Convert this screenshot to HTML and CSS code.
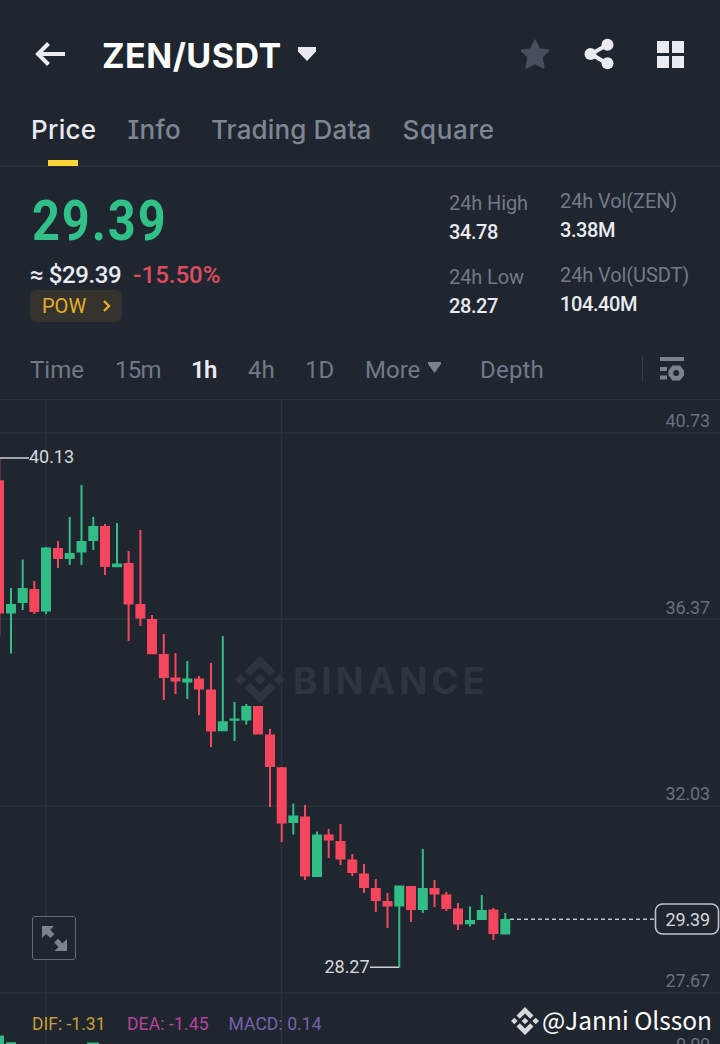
FILE: index.html
```html
<!DOCTYPE html>
<html lang="en">
<head>
<meta charset="utf-8">
<title>ZEN/USDT</title>
<link rel="stylesheet" href="styles.css">
</head>
<body>
<main class="screen">
  <header class="topbar">
    <svg class="back" width="32" height="28" viewBox="0 0 32 28"><path d="M31 14H4M14.500 3.500L4 14l10.500 10.500"/></svg>
    <h1 class="pair">ZEN/USDT</h1>
    <svg class="pair-caret" width="20" height="16" viewBox="0 0 20 16"><path d="M1 1h18v4.500L10 15 1 5.500z"/></svg>
    <nav class="actions">
      <svg class="star" width="32" height="32" viewBox="0 0 32 32"><path d="M16 2.500l4.200 8.800 9.300 1.300-6.800 6.400 1.900 10.500L16 25.400l-8.600 4.100 1.900-10.500-6.800-6.400 9.300-1.300z"/></svg>
      <svg class="share" width="30" height="32" viewBox="0 0 30 32"><path d="M23 7L7 16l16 9.500"/><circle cx="23.500" cy="6.700" r="6"/><circle cx="6.500" cy="16" r="6"/><circle cx="23.500" cy="25.300" r="6"/></svg>
      <svg class="grid-icon" width="27" height="27" viewBox="0 0 27 27"><path d="M0 0h12v12H0zM15 0h12v12H15zM0 15h12v12H0zM15 15h12v12H15z"/></svg>
    </nav>
  </header>

  <nav class="tabs">
    <a class="tab tab-active">Price</a>
    <a class="tab tab-info">Info</a>
    <a class="tab tab-data">Trading Data</a>
    <a class="tab">Square</a>
  </nav>

  <section class="summary">
    <div class="quote">
      <div class="last">29.39</div>
      <div class="fiat"><span class="usd">≈ $29.39</span><span class="change">-15.50%</span></div>
      <div class="tag">POW<svg width="8" height="12" viewBox="0 0 8 12"><path d="M1 1l5 5-5 5"/></svg></div>
    </div>
    <dl class="stats stats-range">
      <dt>24h High</dt><dd>34.78</dd>
      <dt>24h Low</dt><dd>28.27</dd>
    </dl>
    <dl class="stats stats-volume">
      <dt>24h Vol(ZEN)</dt><dd>3.38M</dd>
      <dt>24h Vol(USDT)</dt><dd>104.40M</dd>
    </dl>
  </section>

  <nav class="intervals">
    <a class="i-time">Time</a>
    <a class="i-15m">15m</a>
    <a class="i-1h">1h</a>
    <a class="i-4h">4h</a>
    <a class="i-1d">1D</a>
    <a class="i-more">More<svg width="13" height="11" viewBox="0 0 13 11"><path d="M0 0h13v2L6.500 11 0 2z"/></svg></a>
    <a class="i-depth">Depth</a>
    <span class="settings">
      <svg width="24" height="25" viewBox="0 0 24 25"><path d="M0 0h24v4H0zM0 10h7v4H0zM0 18.500h7v4H0z"/><path fill-rule="evenodd" d="M12.500 8.500h7.500l4 5v5l-4 5h-7.500l-4-5v-5zM16.200 13a3 3 0 1 0 0 6 3 3 0 0 0 0-6z"/></svg>
    </span>
  </nav>

  <section class="chart">
    <svg class="plot" width="720" height="645" viewBox="0 399 720 645">
      <path class="gridline" d="M0 399.500H720M0 433H720M0 619H720M0 806H720M0 993H720M46 399V1044M281.500 399V1044"/>
      <g class="watermark">
        <path d="M260 655.500l15.500 15.500-5.500 5.500-10-10-10 10-5.500-5.500zM260 703.500l15.500-15.500-5.500-5.500-10 10-10-10-5.500 5.500zM260 674l5.500 5.500-5.500 5.500-5.500-5.500zM240.500 674l5.500 5.500-5.500 5.500-5.500-5.500zM279 674l5.500 5.500-5.500 5.500-5.500-5.500z"/>
        <text x="293" y="693.500" textLength="192">BINANCE</text>
      </g>
      <path class="wick down" d="M-.7 458V636M34.300 581V614M58 541V568M105 524V575M128.600 551V641M140.400 530V626M152 615V654M163.800 634V700M175.500 653V694M199 676V715M211 663V747M270 729V807M281.700 767V842M305 805V880M328.700 829V858M340.500 824V865M352.300 854V876M364 864V893M375.800 879V912M387.500 893V928M411 886V922M434.500 880V907M446.300 892V911M458 903V930M493.400 908V940"/>
      <path class="wick up" d="M11 588V653.500M22.700 559.500V610M46 547V614M69.700 517V565M81.500 485V565M93.300 517V550M117 523V567M187.300 661V699M222.800 636V731M234.500 702V741M246.300 704V724.500M293.300 803.500V834.500M317 831.500V877M399.300 886V967.500M422.800 849V913M470 906.500V926.500M481.800 895V920M505.300 913V934"/>
      <path class="body down" d="M-1 480.300V613.500M34.300 589V612M58 548V559M105 526V567M128.600 563V604.500M140.400 604V618.500M152 619V654.300M163.800 654V678M175.500 677.500V681.500M199 678.500V689.500M211 689.500V731.500M258 706V734.500M270 734.500V767M281.700 767.300V823.500M305 816.500V876.500M328.700 834.500V840.500M340.500 841V859.500M352.300 859.500V873M364 873.500V888M375.800 888V901M387.500 901V906.500M411 886V910M434.500 888V894.500M446.300 894.500V909M458 908.500V924.500M493.400 909.500V934"/>
      <path class="body up" d="M11 604V613.500M22.700 588V603M46 547.500V611.500M69.700 553V559M81.500 541V552.500M93.300 526V541M117 563.500V567.300M187.300 678.500V682.500M222.800 721.300V731.300M234.500 718.500V720.700M246.300 706V720.500M293.300 815.500V823M317 834.500V877M399.300 885.500V906.500M422.800 888V910M470 920V924.300M481.800 910V920M505.300 919V934.500"/>
      <path class="marker" d="M0 458H29M370 967.200H399"/>
      <text class="extreme" x="29" y="463" textLength="45">40.13</text>
      <text class="extreme" x="324.500" y="973" textLength="45">28.27</text>
      <path class="last-line" d="M510 919.300H655"/>
      <g class="axis">
        <text x="665.500" y="427" textLength="44.500">40.73</text>
        <text x="665.500" y="613.500" textLength="44.500">36.37</text>
        <text x="665.500" y="800" textLength="44.500">32.03</text>
        <text x="665.500" y="987" textLength="44.500">27.67</text>
        <text x="676" y="1050.500" textLength="34">0.00</text>
      </g>
      <rect class="last-box" x="655.500" y="904" width="63" height="30" rx="7"/>
      <text class="extreme" x="665.500" y="925.500" textLength="44.500">29.39</text>
      <g class="macd">
        <text class="dif" x="32" y="1029.500" textLength="73.500">DIF: -1.31</text>
        <text class="dea" x="127" y="1029.500" textLength="81.500">DEA: -1.45</text>
        <text class="hist" x="228.500" y="1029.500" textLength="93">MACD: 0.14</text>
      </g>
      <path class="bars" d="M0 1035.500H4V1044H0zM6 1042.300H16V1044H6zM87 1042.500H99V1044H87z"/>
    </svg>
    <button class="expand" aria-label="Full screen">
      <svg width="25" height="25" viewBox="0 0 25 25"><path d="M0 0h12L8.300 3.700l4 4.500L8.500 12 4 8 0 12zM25 25H12.500l4-4-4.300-4.500 3.800-3.800 4.500 4.500L25 13z"/></svg>
    </button>
    <div class="author">
      <svg width="28" height="28" viewBox="0 0 28 28"><path d="M14 0l8.500 8.500-3.300 3.300L14 6.600l-5.200 5.200-3.300-3.300zM14 28l8.500-8.500-3.300-3.300L14 21.400l-5.200-5.200-3.300 3.300zM14 10.700l3.300 3.300-3.300 3.300-3.300-3.300zM3.300 10.700L6.600 14l-3.300 3.300L0 14zM24.700 10.700L28 14l-3.300 3.300-3.300-3.300z"/></svg>
      <span>@Janni Olsson</span>
    </div>
  </section>
</main>
</body>
</html>
```
FILE: styles.css
```css
* { box-sizing: border-box; }

body {
  margin: 0;
  background: #1f262f;
  font-family: Roboto, "Noto Sans", sans-serif;
  color: #e9ebf0;
}

svg { display: block; flex: none; }

.screen {
  width: 720px;
  height: 1044px;
  overflow: hidden;
}

/* Header */
.topbar {
  display: flex;
  align-items: center;
  height: 108px;
  padding: 0 36px 0 34px;
}

.back { fill: none; stroke: #e9ebf0; stroke-width: 4; }

.pair {
  margin: 4px 0 0 36px;
  width: 195px;
  font: 650 34px/40px Inter, sans-serif;
  letter-spacing: 0.5px;
  color: #fff;
}

.pair-caret { fill: #e9ebf0; }

.actions {
  display: flex;
  align-items: center;
  margin-left: auto;
}

.star { fill: #474f5c; stroke: #474f5c; stroke-width: 2; stroke-linejoin: round; margin-right: 33px; }
.share { fill: #e9ebf0; margin-right: 43px; }
.share path { fill: none; stroke: #e9ebf0; stroke-width: 4; }
.grid-icon { fill: #e9ebf0; }

/* Tabs */
.tabs {
  display: flex;
  gap: 31px;
  height: 59px;
  padding-left: 31px;
  border-bottom: 2px solid #29303a;
}

.tab {
  position: relative;
  padding-top: 6px;
  font: 500 26px/32px Inter, sans-serif;
  letter-spacing: 0.3px;
  color: #7e8694;
  white-space: nowrap;
}

.tab-info { font-feature-settings: "cv08"; }
.tab-data { margin-left: -1px; letter-spacing: 0.15px; }
.tab-active { color: #e9ebf0; }

.tab:last-child { letter-spacing: 0.7px; }

.tab-active::after {
  content: "";
  position: absolute;
  left: 17px;
  bottom: -1px;
  width: 30px;
  height: 6px;
  background: #fcd535;
}

/* Price summary */
.summary {
  display: flex;
  height: 171px;
  padding-left: 30px;
}

.quote { width: 419px; }

.last {
  margin: 24px 0 0 2px;
  font-size: 56px;
  line-height: 60px;
  font-weight: 700;
  letter-spacing: 2.2px;
  color: #32c089;
  transform: scaleX(0.87);
  transform-origin: 0 50%;
}

.fiat {
  display: flex;
  gap: 12px;
  margin-top: 9px;
  font-size: 24px;
  line-height: 30px;
  font-weight: 500;
}

.usd { letter-spacing: -0.4px; }
.change { color: #df4b60; }

.tag {
  display: flex;
  align-items: center;
  gap: 17px;
  width: 92px;
  height: 32px;
  padding-left: 12px;
  border-radius: 6px;
  background: #34332d;
  font-size: 20px;
  color: #e5ad27;
}

.tag svg { fill: none; stroke: #e5ad27; stroke-width: 2.4; }

.stats { margin: 24px 0 0; white-space: nowrap; }
.stats-range { width: 111px; }
.stats-volume { margin-top: 22px; }

.stats dt {
  font-size: 20px;
  line-height: 24px;
  letter-spacing: -0.1px;
  color: #727a88;
}

.stats dd {
  margin: 5px 0 21px;
  font-size: 20px;
  line-height: 24px;
  font-weight: 500;
  letter-spacing: -0.4px;
}

/* Chart intervals */
.intervals {
  display: flex;
  align-items: center;
  height: 61px;
  padding: 2px 36px 0 30px;
  font-size: 24px;
  color: #727a88;
}

.i-time { width: 85px; }
.i-15m { width: 76px; letter-spacing: -0.7px; }
.i-1h { width: 57px; font-weight: 600; letter-spacing: -0.7px; color: #e9ebf0; }
.i-4h { width: 57px; }
.i-1d { width: 60px; }
.i-more { display: flex; align-items: center; gap: 8px; width: 115px; }
.i-more svg { fill: #7b8391; margin-top: -4px; }
.i-depth { letter-spacing: 0.2px; }

.settings {
  margin-left: auto;
  padding-left: 17px;
  border-left: 1px solid #353c47;
}

.settings svg { fill: #7b8391; }

/* Chart */
.chart { position: relative; height: 645px; }

.gridline { fill: none; stroke: #2b323c; stroke-width: 1.4; }
.watermark { fill: #2e3540; }
.watermark text { font: 700 37px Inter, sans-serif; }

.wick { fill: none; stroke-width: 2; }
.body { fill: none; stroke-width: 10; }
.up { stroke: #30bd86; }
.down { stroke: #f6465d; }

.marker { stroke: #cdd0d6; stroke-width: 1.6; }
.extreme { font-size: 18px; fill: #d5d8de; }
.axis text { font-size: 18px; fill: #69717e; }

.last-line { stroke: #bfc3ca; stroke-width: 1.4; stroke-dasharray: 4 3; }
.last-box { fill: #1f262f; stroke: #bfc3ca; stroke-width: 1.6; }

.macd text { font-size: 17.5px; }
.dif { fill: #c79d35; }
.dea { fill: #b8429d; }
.hist { fill: #7761ac; }
.bars { fill: #30bd86; }

.expand {
  position: absolute;
  left: 32px;
  top: 517px;
  display: grid;
  place-items: center;
  width: 44px;
  height: 44px;
  padding: 0;
  border: 1.5px solid #656d7a;
  border-radius: 3px;
  background: #1f262f;
}

.expand svg { fill: #7b8391; }

.author {
  position: absolute;
  right: 8px;
  bottom: 8px;
  display: flex;
  align-items: center;
  gap: 3px;
  font: 400 24.5px/32px "Noto Sans CJK SC", sans-serif;
  color: #fff;
}

.author span { margin-top: -2px; }
.author svg { fill: #d7d8da; }
```
